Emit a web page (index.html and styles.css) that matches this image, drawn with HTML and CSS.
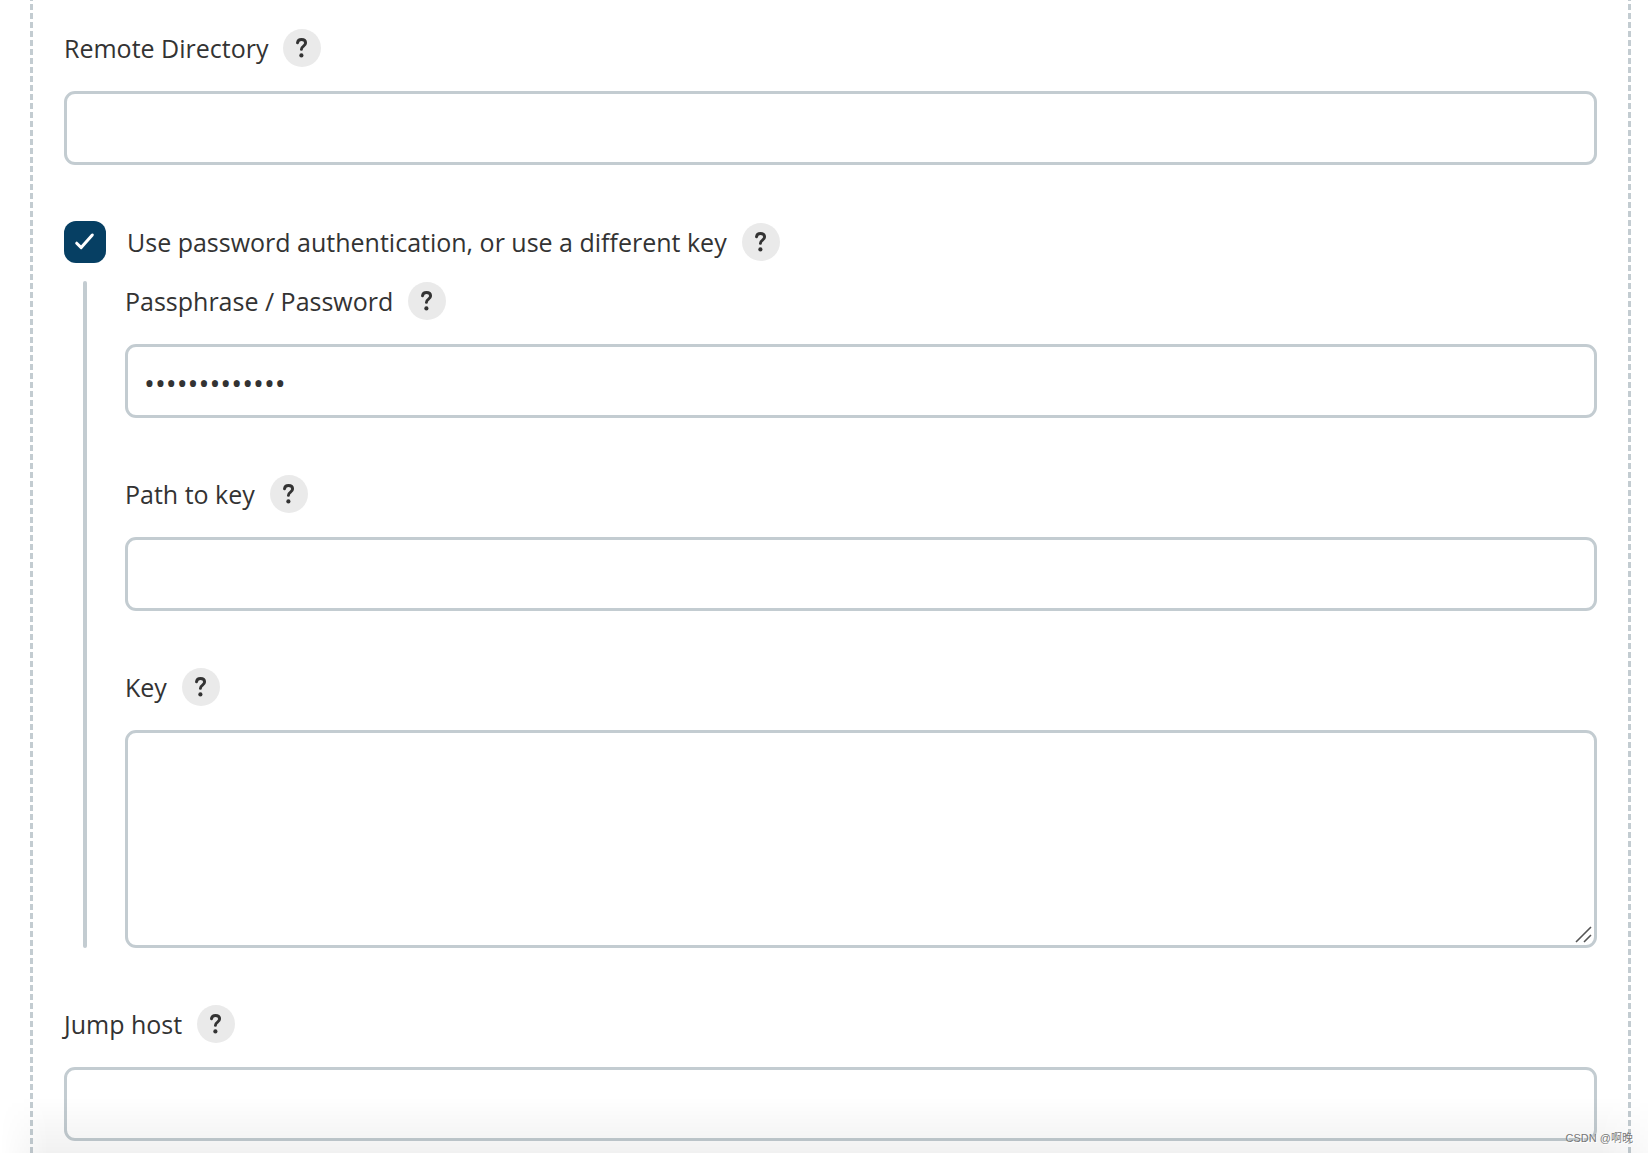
FILE: index.html
```html
<!DOCTYPE html>
<html lang="en">
<head>
<meta charset="utf-8">
<title>SSH Server</title>
<link rel="stylesheet" href="styles.css">
</head>
<body>
<svg class="sprite" aria-hidden="true">
  <symbol id="question" viewBox="0 0 38 38">
    <path d="M14.5 13.7C14.8 11.7 16.3 10.5 18.5 10.5C20.9 10.5 22.6 11.9 22.6 14.1C22.6 17.2 18.4 17.1 18.4 20.4" fill="none" stroke="currentColor" stroke-width="2.9" stroke-linecap="round"/>
    <circle cx="18.4" cy="26.4" r="2.1" fill="currentColor"/>
  </symbol>
</svg>
<main class="page">
  <form class="frame">
    <div class="field">
      <div class="field-head">
        <label for="remote">Remote Directory</label>
        <button class="help" type="button" aria-label="Help for Remote Directory"><svg><use href="#question"/></svg></button>
      </div>
      <input class="control" id="remote" type="text">
    </div>

    <div class="toggle">
      <span class="check">
        <input class="check-box" id="use-password" type="checkbox" checked>
        <svg class="check-mark" viewBox="0 0 42 42" aria-hidden="true"><path d="M12.7 22.2L17.2 26.6L28.3 14"/></svg>
      </span>
      <div class="field-head">
        <label for="use-password">Use password authentication, or use a different key</label>
        <button class="help" type="button" aria-label="Help for password authentication"><svg><use href="#question"/></svg></button>
      </div>
    </div>

    <div class="group">
      <div class="group-line"></div>
      <div class="group-fields">
        <div class="field">
          <div class="field-head">
            <label for="password">Passphrase / Password</label>
            <button class="help" type="button" aria-label="Help for Passphrase / Password"><svg><use href="#question"/></svg></button>
          </div>
          <input class="control control-password" id="password" type="password" value="abcdefghijklm">
        </div>
        <div class="field">
          <div class="field-head">
            <label for="path">Path to key</label>
            <button class="help" type="button" aria-label="Help for Path to key"><svg><use href="#question"/></svg></button>
          </div>
          <input class="control" id="path" type="text">
        </div>
        <div class="field">
          <div class="field-head">
            <label for="key">Key</label>
            <button class="help" type="button" aria-label="Help for Key"><svg><use href="#question"/></svg></button>
          </div>
          <div class="area">
            <textarea class="control control-area" id="key"></textarea>
            <svg class="grip" viewBox="0 0 18 18" aria-hidden="true"><path d="M1 16L16 1M9 16L16 9"/></svg>
          </div>
        </div>
      </div>
    </div>

    <div class="field">
      <div class="field-head">
        <label for="jump">Jump host</label>
        <button class="help" type="button" aria-label="Help for Jump host"><svg><use href="#question"/></svg></button>
      </div>
      <input class="control" id="jump" type="text">
    </div>
  </form>
  <div class="shade"></div>
  <div class="credit">CSDN @啊晚</div>
</main>
</body>
</html>
```
FILE: styles.css
```css
* {
  box-sizing: border-box;
}

body {
  margin: 0;
  background: #fff;
  color: #333;
  font: 500 25px/38px "Open Sans", "Noto Sans", sans-serif;
}

.sprite {
  position: absolute;
  width: 0;
  height: 0;
}

.page {
  position: relative;
  min-height: 100vh;
  overflow: hidden;
}

.frame {
  margin: -5px 17px 0 30px;
  padding: 34px 31px 12px;
  border: 3px dashed #c3ccd1;
  border-width: 0 3px;
}

.field {
  display: flex;
  flex-direction: column;
  gap: 24px;
}

.field-head {
  display: flex;
  align-items: center;
  gap: 15px;
}

.help {
  width: 38px;
  height: 38px;
  padding: 0;
  border: 0;
  border-radius: 50%;
  background: #eaeaea;
  color: #333;
}

.help svg {
  display: block;
  width: 38px;
  height: 38px;
}

.control {
  display: block;
  width: 100%;
  height: 74px;
  margin: 0;
  padding: 2px 16px 0;
  border: 3px solid #c3ccd1;
  border-radius: 11px;
  outline: 0;
  background: #fff;
  color: #333;
  font: inherit;
}

.control-password {
  font-size: 29px;
  font-weight: 400;
}

.control-area {
  height: 218px;
  resize: none;
}

.area {
  position: relative;
}

.grip {
  position: absolute;
  right: 4px;
  bottom: 4px;
  width: 18px;
  height: 18px;
  fill: none;
  stroke: #555;
  stroke-width: 1.6;
}

.toggle {
  display: flex;
  align-items: center;
  gap: 21px;
  margin-top: 56px;
}

.check {
  position: relative;
  width: 42px;
  height: 42px;
}

.check-box {
  display: block;
  width: 42px;
  height: 42px;
  margin: 0;
  border-radius: 12px;
  appearance: none;
  background: #063f63;
}

.check-mark {
  position: absolute;
  inset: 0;
  fill: none;
  stroke: #fff;
  stroke-width: 3;
  stroke-linecap: round;
  stroke-linejoin: round;
  pointer-events: none;
}

.group {
  display: grid;
  grid-template-columns: 4px 1fr;
  gap: 38px;
  margin: 18px 0 57px 19px;
}

.group-line {
  border-radius: 2px;
  background: #c3ccd1;
}

.group-fields {
  display: flex;
  flex-direction: column;
  gap: 57px;
  padding-top: 1px;
}

/* soft shadow of the bar below the form */
.shade {
  position: absolute;
  inset: auto 0 0;
  height: 56px;
  background: linear-gradient(transparent, rgba(0, 0, 0, 0.055));
  mask-image: linear-gradient(90deg, transparent, #000 48px, #000 calc(100% - 48px), rgba(0, 0, 0, 0.4));
  pointer-events: none;
}

.credit {
  position: absolute;
  right: 15px;
  bottom: 7px;
  color: #777;
  font: 11px/16px "Liberation Sans", "Noto Sans CJK SC", sans-serif;
  text-shadow: 1px 1px 0 #fff;
}
```
